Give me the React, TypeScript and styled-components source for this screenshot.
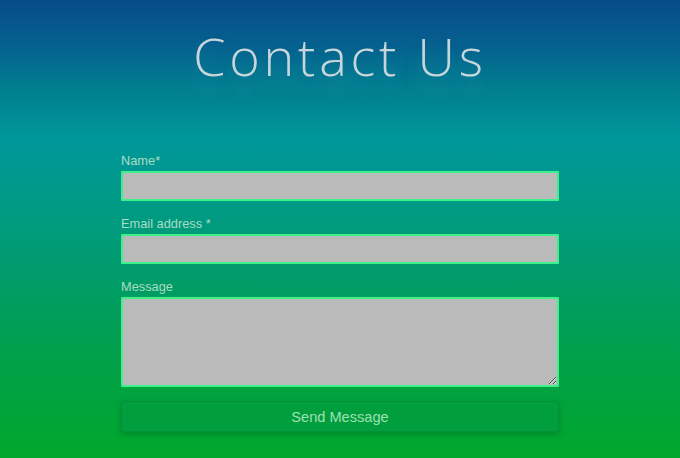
import React from 'react';
import styled, { createGlobalStyle } from 'styled-components';

const GlobalStyle = createGlobalStyle`
  html, body {
    margin: 0;
    padding: 0;
  }
  body {
    font-family: 'Liberation Sans', Arial, sans-serif;
  }
`;

const fields = [
  { id: 'name', label: 'Name*', type: 'text' },
  { id: 'email', label: 'Email address *', type: 'email' },
];

export default function App(): JSX.Element {
  return (
    <>
      <GlobalStyle />
      <Page>
        <Title>Contact Us</Title>
        <Form onSubmit={(e) => e.preventDefault()}>
          {fields.map((f) => (
            <Field key={f.id}>
              <Label htmlFor={f.id}>{f.label}</Label>
              <Input id={f.id} type={f.type} />
            </Field>
          ))}
          <Field>
            <Label htmlFor='message'>Message</Label>
            <TextArea id='message' />
          </Field>
          <SendButton type='submit'>Send Message</SendButton>
        </Form>
      </Page>
    </>
  );
}

const Page = styled.div`
  display: flex;
  flex-direction: column;
  align-items: center;
  min-height: 458px;
  box-sizing: border-box;
  padding-top: 24px;
  background: linear-gradient(
    180deg,
    #064c88 0%,
    #05618f 10%,
    #00808f 20%,
    #00979a 30%,
    #009a85 45%,
    #009c6a 60%,
    #00a04a 78%,
    #00a82a 100%
  );
`;

const Title = styled.h1`
  margin: 0;
  font-family: 'Open Sans', sans-serif;
  font-weight: 300;
  font-size: 52px;
  line-height: 64px;
  letter-spacing: 3.8px;
  color: #c8d6dc;
  text-shadow: 0 14px 18px rgba(120, 200, 230, 0.25);
`;

const Form = styled.form`
  display: flex;
  flex-direction: column;
  gap: 16px;
  width: 438px;
  margin-top: 66px;
`;

const Field = styled.div`
  display: flex;
  flex-direction: column;
  gap: 3px;
`;

const Label = styled.label`
  font-size: 12.8px;
  line-height: 14px;
  color: #a9dcc4;
`;

const Input = styled.input`
  box-sizing: border-box;
  height: 30px;
  margin: 0;
  border: 2px solid #3cf08a;
  border-radius: 1px;
  background: #bababa;
  outline: none;
`;

const TextArea = styled.textarea`
  box-sizing: border-box;
  height: 90px;
  margin: 0;
  border: 2px solid #3cf08a;
  border-radius: 1px;
  background: #bababa;
  outline: none;
  resize: vertical;
`;

const SendButton = styled.button`
  box-sizing: border-box;
  height: 31px;
  margin-top: -2px;
  border: 1px solid #00913a;
  border-radius: 2px;
  background: #009e3c;
  box-shadow: 0 2px 6px rgba(0, 60, 20, 0.3);
  font-family: 'Liberation Sans', Arial, sans-serif;
  font-size: 14.6px;
  color: #9fe0b4;
  cursor: pointer;
`;
